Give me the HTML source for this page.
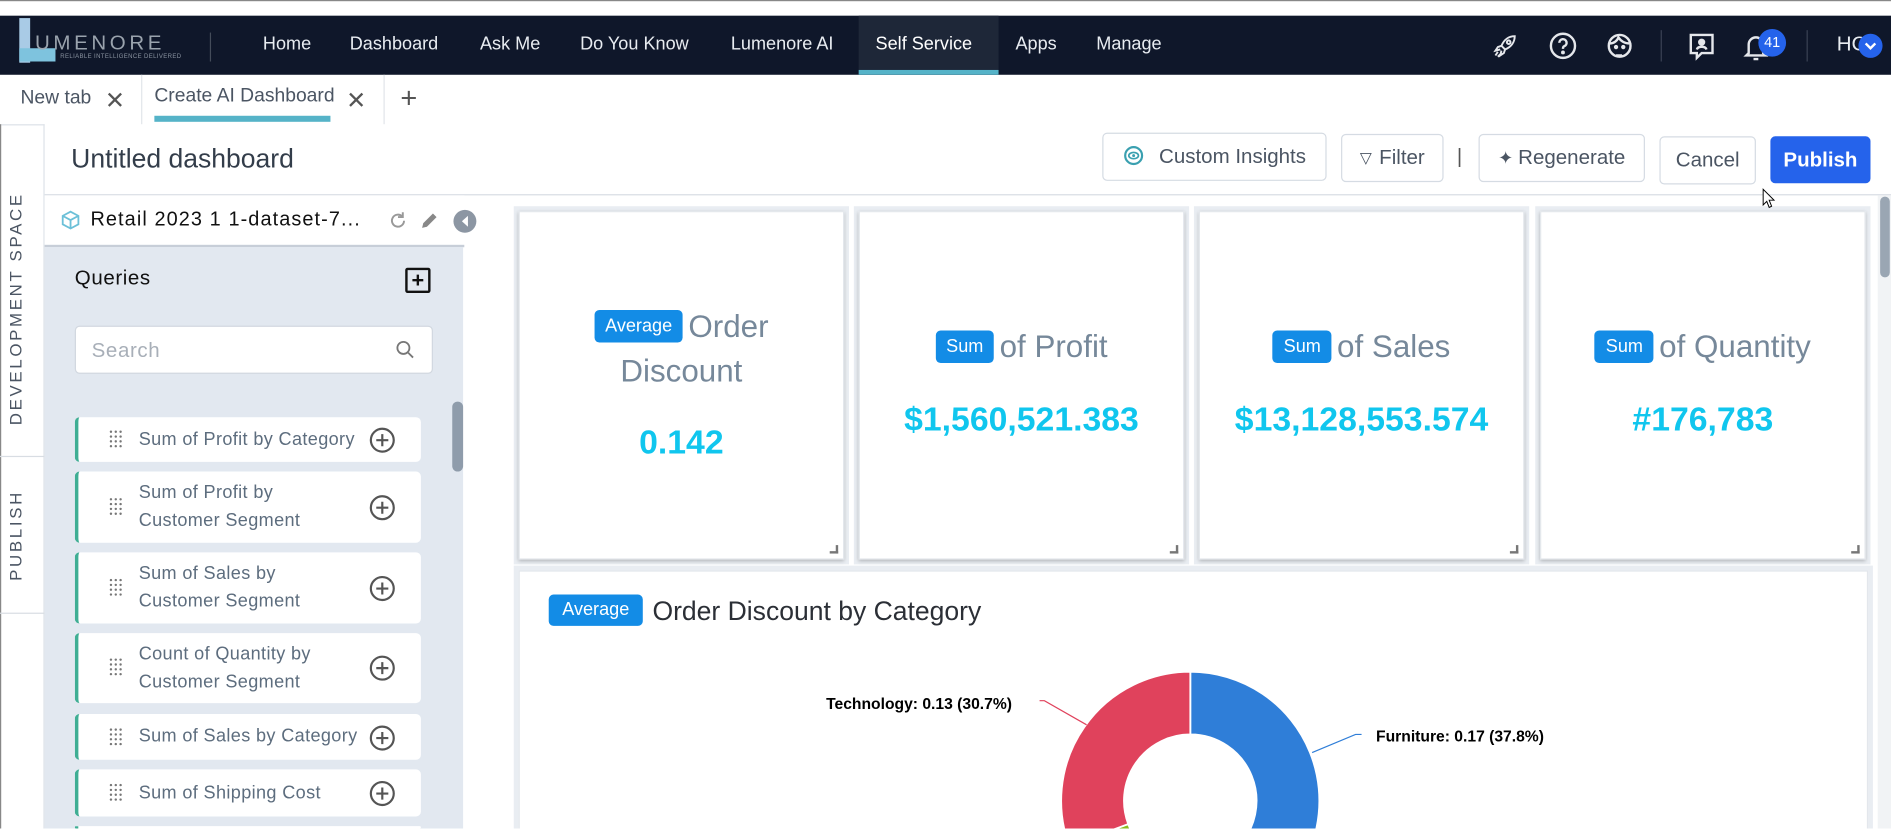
<!DOCTYPE html>
<html><head><meta charset="utf-8"><style>
html,body{margin:0;padding:0;width:1891px;height:829px;overflow:hidden;background:#fff;font-family:"Liberation Sans",Arial,sans-serif;}
#w{position:absolute;left:0;top:0;width:1568px;height:687px;transform:scale(1.20599);transform-origin:0 0;overflow:hidden;background:#fff}
.a{position:absolute}
.nav{color:#e8ecf1;font-size:15px;top:28px}
.btn{position:absolute;border:1px solid #d5dbe3;border-radius:4px;background:#fff;color:#4b5563;font-size:17px;display:flex;align-items:center;justify-content:center;box-sizing:border-box}
.q{position:absolute;left:62px;width:287px;background:#fff;border-left:3px solid #3fae94;border-radius:4px;box-sizing:border-box;color:#5d6d7e;font-size:15px;letter-spacing:.3px}
.q .t{position:absolute;left:50px;line-height:23px}
.card{position:absolute;top:175px;width:268px;height:287px;background:#fff;border:1px solid #e3e7ec;box-shadow:0 1px 3px rgba(0,0,0,.25),0 0 0 4px #e9edf2;text-align:center}
.badge{display:inline-block;background:#138ce6;color:#fff;font-size:15px;line-height:17px;border-radius:4px;padding:5px 9px;vertical-align:middle}
.ttl{color:#76889a;font-size:26px;vertical-align:middle}
.val{color:#10c6ee;font-weight:bold;font-size:28px;position:absolute;width:100%;left:0}
.corner{position:absolute;right:4px;bottom:4px;width:5px;height:5px;border-right:2px solid #777;border-bottom:2px solid #777}
</style></head><body><div id="w">
<div class="a" style="left:0;top:0;width:1568px;height:1px;background:#888"></div>
<!-- navbar -->
<div class="a" style="left:0;top:13px;width:1568px;height:49px;background:#0f172a"></div>
<div class="a" style="left:16px;top:15px;width:9px;height:37px;background:#a9cbe6"></div>
<div class="a" style="left:16px;top:40px;width:30px;height:11px;background:#7ec3de"></div>
<div class="a" style="left:29px;top:26px;color:#9aa3ad;font-size:17px;letter-spacing:3px">UMENORE</div>
<div class="a" style="left:50px;top:44px;color:#8a93a0;font-size:5px;letter-spacing:.3px;white-space:nowrap">RELIABLE INTELLIGENCE DELIVERED</div>
<div class="a" style="left:174px;top:27px;width:1px;height:24px;background:#444c5a"></div>
<div class="a nav" style="left:218px">Home</div>
<div class="a nav" style="left:290px">Dashboard</div>
<div class="a nav" style="left:398px">Ask Me</div>
<div class="a nav" style="left:481px">Do You Know</div>
<div class="a nav" style="left:606px">Lumenore AI</div>
<div class="a" style="left:712px;top:13px;width:116px;height:49px;background:#1e2738"></div>
<div class="a" style="left:712px;top:58px;width:116px;height:4px;background:#55b3c8"></div>
<div class="a nav" style="left:726px;color:#fff">Self Service</div>
<div class="a nav" style="left:842px">Apps</div>
<div class="a nav" style="left:909px">Manage</div>
<svg class="a" style="left:1236px;top:26px" width="24" height="24" viewBox="0 0 24 24" fill="none" stroke="#e5e7eb" stroke-width="1.6"><path d="M20 4c-5 0-9 3-11 8l3 3c5-2 8-6 8-11z"/><circle cx="15" cy="9" r="1.5"/><path d="M9 12l-3 1-2 3 4-1M12 15l-1 3-3 2 1-4M6 17l-2 3M8 19l-2 2"/></svg>
<svg class="a" style="left:1284px;top:26px" width="24" height="24" viewBox="0 0 24 24" fill="none" stroke="#e5e7eb" stroke-width="2"><circle cx="12" cy="12" r="10"/><path d="M9 9.5a3 3 0 1 1 4 2.8c-1 .4-1 1.2-1 2.2"/><circle cx="12" cy="17.5" r=".6" fill="#e5e7eb"/></svg>
<svg class="a" style="left:1331px;top:26px" width="24" height="24" viewBox="0 0 24 24" fill="none" stroke="#e5e7eb" stroke-width="2"><circle cx="12" cy="12" r="9"/><path d="M4 10c3 0 6-2 7-5 2 3 5 5 9 5"/><circle cx="9" cy="13" r=".8" fill="#e5e7eb"/><circle cx="15" cy="13" r=".8" fill="#e5e7eb"/><path d="M9 20h5"/></svg>
<div class="a" style="left:1377px;top:25px;width:1px;height:26px;background:#3a4254"></div>
<svg class="a" style="left:1399px;top:26px" width="24" height="26" viewBox="0 0 24 26" fill="none" stroke="#e5e7eb" stroke-width="2"><path d="M3 3h18v15h-9l-4 4v-4H3z"/><circle cx="12" cy="9" r="2" fill="#e5e7eb"/><path d="M8 15c1-3 7-3 8 0" /></svg>
<svg class="a" style="left:1444px;top:26px" width="24" height="26" viewBox="0 0 24 26" fill="none" stroke="#e5e7eb" stroke-width="2"><path d="M6 18V11a6 6 0 0 1 12 0v7l2 2H4z"/><path d="M10 23h4"/></svg>
<div class="a" style="left:1458px;top:24px;width:23px;height:23px;border-radius:50%;background:#2563eb;color:#fff;font-size:12px;text-align:center;line-height:23px">41</div>
<div class="a" style="left:1498px;top:25px;width:1px;height:26px;background:#3a4254"></div>
<div class="a nav" style="left:1523px;font-size:17px;top:27px">HC</div>
<div class="a" style="left:1541px;top:28px;width:20px;height:20px;border-radius:50%;background:#2563eb"></div>
<svg class="a" style="left:1545px;top:33px" width="12" height="10" viewBox="0 0 12 10"><path d="M2 3l4 4 4-4" fill="none" stroke="#fff" stroke-width="2"/></svg>
<!-- tabs -->
<div class="a" style="left:17px;top:73px;color:#4b5563;font-size:16px">New tab</div>
<div class="a" style="left:87px;top:71px;color:#555;font-size:20px">✕</div>
<div class="a" style="left:117px;top:62px;width:1px;height:41px;background:#e2e5ea"></div>
<div class="a" style="left:128px;top:71px;color:#4b5563;font-size:16px">Create AI Dashboard</div>
<div class="a" style="left:128px;top:96px;width:146px;height:5px;background:#55b3c8"></div>
<div class="a" style="left:287px;top:71px;color:#555;font-size:20px">✕</div>
<div class="a" style="left:318px;top:62px;width:1px;height:41px;background:#e2e5ea"></div>
<div class="a" style="left:332px;top:68px;color:#555;font-size:24px">+</div>
<!-- left rail -->
<div class="a" style="left:0;top:103px;width:37px;height:584px;background:#fff;border-right:1px solid #dde2e8;border-top:1px solid #dde2e8;box-sizing:border-box"></div>
<div class="a" style="left:0;top:103px;width:1px;height:584px;background:#888"></div>
<div class="a" style="left:-87px;top:248px;width:200px;transform:rotate(-90deg);color:#4b5563;font-size:14px;letter-spacing:2.2px;text-align:center;white-space:nowrap">DEVELOPMENT SPACE</div>
<div class="a" style="left:0;top:378px;width:37px;height:1px;background:#d8dde3"></div>
<div class="a" style="left:-37px;top:436px;width:100px;transform:rotate(-90deg);color:#4b5563;font-size:14px;letter-spacing:2.2px;text-align:center;white-space:nowrap">PUBLISH</div>
<div class="a" style="left:0;top:508px;width:37px;height:1px;background:#d8dde3"></div>
<!-- header -->
<div class="a" style="left:59px;top:119px;color:#333d4a;font-size:22px">Untitled dashboard</div>
<div class="a" style="left:37px;top:161px;width:1531px;height:1px;background:#d8dde3"></div>
<div class="btn" style="left:914px;top:110px;width:186px;height:40px"><svg width="18" height="18" viewBox="0 0 18 18" style="margin-right:12px"><circle cx="9" cy="8" r="7" fill="none" stroke="#3aa0b0" stroke-width="1.8"/><ellipse cx="9" cy="8" rx="4" ry="2.6" fill="none" stroke="#3aa0b0" stroke-width="1.4"/><circle cx="9" cy="8" r="1.2" fill="#3aa0b0"/></svg>Custom Insights</div>
<div class="btn" style="left:1112px;top:111px;width:85px;height:40px"><span style="font-size:13px;margin-right:6px">▽</span>Filter</div>
<div class="a" style="left:1208px;top:120px;color:#555;font-size:17px">|</div>
<div class="btn" style="left:1226px;top:111px;width:138px;height:40px"><span style="font-size:15px;margin-right:4px">✦</span>Regenerate</div>
<div class="btn" style="left:1376px;top:113px;width:80px;height:40px">Cancel</div>
<div class="btn" style="left:1468px;top:113px;width:83px;height:39px;background:#2563eb;border-color:#2563eb;color:#fff;font-weight:bold">Publish</div>
<!-- left panel -->
<div class="a" style="left:37px;top:162px;width:348px;height:41px;background:#fff;border-bottom:2px solid #c7ced8"></div>
<svg class="a" style="left:50px;top:174px" width="17" height="17" viewBox="0 0 17 17" fill="none" stroke="#6cc0d8" stroke-width="1.5"><path d="M8.5 1.5l6.5 3.5v7l-6.5 3.5-6.5-3.5V5zM2 5l6.5 3.5L15 5M8.5 8.5v7"/></svg>
<div class="a" style="left:75px;top:173px;color:#111;font-size:16.5px;letter-spacing:.9px">Retail 2023 1 1-dataset-7...</div>
<svg class="a" style="left:322px;top:175px" width="16" height="16" viewBox="0 0 16 16" fill="none" stroke="#999" stroke-width="1.6"><path d="M13 8a5 5 0 1 1-1.5-3.6"/><path d="M12 1v4H8" /></svg>
<svg class="a" style="left:347px;top:174px" width="18" height="18" viewBox="0 0 18 18"><path d="M3 15l1-4 8-8 3 3-8 8z" fill="#888"/></svg>
<div class="a" style="left:376px;top:174px;width:19px;height:19px;border-radius:50%;background:#8c96a3"></div>
<svg class="a" style="left:381px;top:178px" width="10" height="11" viewBox="0 0 10 11"><path d="M7 1L2 5.5 7 10z" fill="#fff"/></svg>
<div class="a" style="left:37px;top:205px;width:347px;height:482px;background:#e2e8f0"></div>
<div class="a" style="left:375px;top:333px;width:9px;height:58px;border-radius:5px;background:#8f9cab"></div>
<div class="a" style="left:62px;top:221px;color:#111;font-size:17px;letter-spacing:.5px">Queries</div>
<div class="a" style="left:336px;top:222px;width:17px;height:17px;border:2px solid #111;border-radius:2px;font-size:18px;line-height:17px;text-align:center;font-weight:bold;color:#111">+</div>
<div class="a" style="left:62px;top:270px;width:297px;height:40px;background:#fff;border:1px solid #d2d8e0;border-radius:4px;box-sizing:border-box"></div>
<div class="a" style="left:76px;top:281px;color:#a8afb8;font-size:17px;letter-spacing:.5px">Search</div>
<svg class="a" style="left:327px;top:281px" width="18" height="18" viewBox="0 0 18 18" fill="none" stroke="#777" stroke-width="1.5"><circle cx="7.5" cy="7.5" r="5"/><path d="M11.5 11.5l4 4"/></svg>

<div class="q" style="top:346px;height:37px"><span class="t" style="top:7px">Sum of Profit by Category</span></div>
<div class="q" style="top:391px;height:59px"><span class="t" style="top:6px">Sum of Profit by<br>Customer Segment</span></div>
<div class="q" style="top:458px;height:59px"><span class="t" style="top:6px">Sum of Sales by<br>Customer Segment</span></div>
<div class="q" style="top:525px;height:58px"><span class="t" style="top:6px">Count of Quantity by<br>Customer Segment</span></div>
<div class="q" style="top:592px;height:38px"><span class="t" style="top:7px">Sum of Sales by Category</span></div>
<div class="q" style="top:638px;height:39px"><span class="t" style="top:8px">Sum of Shipping Cost</span></div>
<div class="q" style="top:685px;height:2px"></div>
<svg class="a" style="left:0;top:0" width="400" height="687">
<defs><g id="dots" fill="#777"><circle cx="0" cy="0" r="1"/><circle cx="4" cy="0" r="1"/><circle cx="8" cy="0" r="1"/><circle cx="0" cy="4" r="1"/><circle cx="4" cy="4" r="1"/><circle cx="8" cy="4" r="1"/><circle cx="0" cy="8" r="1"/><circle cx="4" cy="8" r="1"/><circle cx="8" cy="8" r="1"/><circle cx="0" cy="12" r="1"/><circle cx="4" cy="12" r="1"/><circle cx="8" cy="12" r="1"/></g>
<g id="pl" fill="none" stroke="#555" stroke-width="1.8"><circle cx="0" cy="0" r="9.5"/><path d="M-5 0h10M0-5v5 5"/></g></defs>
<use href="#dots" x="92" y="358"/><use href="#pl" x="317" y="365"/>
<use href="#dots" x="92" y="414"/><use href="#pl" x="317" y="421"/>
<use href="#dots" x="92" y="481"/><use href="#pl" x="317" y="488"/>
<use href="#dots" x="92" y="547"/><use href="#pl" x="317" y="554"/>
<use href="#dots" x="92" y="605"/><use href="#pl" x="317" y="612"/>
<use href="#dots" x="92" y="651"/><use href="#pl" x="317" y="658"/>
</svg>
<!-- cards -->
<div class="card" style="left:430px"><div style="position:absolute;top:76px;width:100%;line-height:37px"><span class="badge">Average</span> <span class="ttl">Order</span><br><span class="ttl">Discount</span></div><div class="val" style="top:175px">0.142</div><div class="corner"></div></div>
<div class="card" style="left:712px"><div style="position:absolute;top:96px;width:100%"><span class="badge">Sum</span> <span class="ttl">of Profit</span></div><div class="val" style="top:156px">$1,560,521.383</div><div class="corner"></div></div>
<div class="card" style="left:994px"><div style="position:absolute;top:96px;width:100%"><span class="badge">Sum</span> <span class="ttl">of Sales</span></div><div class="val" style="top:156px">$13,128,553.574</div><div class="corner"></div></div>
<div class="card" style="left:1277px"><div style="position:absolute;top:96px;width:100%"><span class="badge">Sum</span> <span class="ttl">of Quantity</span></div><div class="val" style="top:156px">#176,783</div><div class="corner"></div></div>
<div class="a" style="left:430px;top:473px;width:1117px;height:214px;background:#fff;border:1px solid #e3e7ec;box-shadow:0 0 0 4px #e9edf2"></div>
<div class="a" style="left:455px;top:493px;background:#138ce6;color:#fff;font-size:15px;border-radius:4px;width:78px;height:26px;line-height:26px;text-align:center">Average</div>
<div class="a" style="left:541px;top:494px;color:#2b2f36;font-size:22px">Order Discount by Category</div>
<svg class="a" style="left:0;top:0" width="1568" height="687">
<path d="M987 557A107 107 0 0 1 1061.4 740.9L1025.2 703.5A55 55 0 0 0 987 609Z" fill="#2f7ed8" stroke="#fff" stroke-width="1.5"/>
<path d="M1061.4 740.9A107 107 0 0 1 886.7 701.5L935.5 683.3A55 55 0 0 0 1025.2 703.5Z" fill="#8bbc21" stroke="#fff" stroke-width="1.5"/>
<path d="M886.7 701.5A107 107 0 0 1 987 557L987 609A55 55 0 0 0 935.5 683.3Z" fill="#e0425c" stroke="#fff" stroke-width="1.5"/>
<path d="M862 581h4l35 20" fill="none" stroke="#e0425c" stroke-width="1"/>
<path d="M1088 624l36-15h5" fill="none" stroke="#2f7ed8" stroke-width="1"/>
<text x="685" y="588" font-family="Liberation Sans,Arial,sans-serif" font-size="13" font-weight="bold" fill="#000">Technology: 0.13 (30.7%)</text>
<text x="1141" y="615" font-family="Liberation Sans,Arial,sans-serif" font-size="13" font-weight="bold" fill="#000">Furniture: 0.17 (37.8%)</text>
<path d="M1462 157v13l3-3 2 5 2-1-2-5h4z" fill="#fff" stroke="#000" stroke-width=".8"/>
</svg>
<div class="a" style="left:1557px;top:162px;width:11px;height:525px;background:#f1f3f5"></div>
<div class="a" style="left:1559px;top:163px;width:8px;height:67px;border-radius:4px;background:#9aa6b3"></div>
</div></body></html>
